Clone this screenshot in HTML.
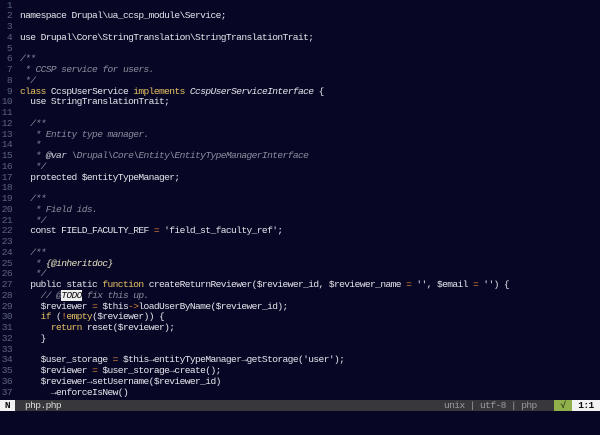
<!DOCTYPE html>
<html><head><meta charset="utf-8"><style>
body{margin:0;width:600px;height:435px;background:#070725;overflow:hidden;font-family:"Liberation Mono",monospace;font-size:9.6px;letter-spacing:-0.61px;color:#e2e2ea}
.l{position:absolute;left:0;height:10.75px;line-height:10.75px;white-space:pre}
.n{display:inline-block;width:12px;text-align:right;color:#5c6478;margin-right:8px;letter-spacing:-0.61px}
.c{color:#8a8c9c;font-style:italic}
.k{color:#e6c062}
.o{color:#e0843c}
.i{font-style:italic}
#sb{position:absolute;left:0;top:400px;width:600px;height:11px;background:#38383c;line-height:11px;white-space:pre}
</style></head><body>
<div class="l" style="top:0.6px"><span class="n">1</span></div>
<div class="l" style="top:11.35px"><span class="n">2</span>namespace Drupal\ua_ccsp_module\Service;</div>
<div class="l" style="top:22.1px"><span class="n">3</span></div>
<div class="l" style="top:32.85px"><span class="n">4</span>use Drupal\Core\StringTranslation\StringTranslationTrait;</div>
<div class="l" style="top:43.6px"><span class="n">5</span></div>
<div class="l" style="top:54.35px"><span class="n">6</span><span class="c">/**</span></div>
<div class="l" style="top:65.1px"><span class="n">7</span><span class="c"> * CCSP service for users.</span></div>
<div class="l" style="top:75.85px"><span class="n">8</span><span class="c"> */</span></div>
<div class="l" style="top:86.6px"><span class="n">9</span><span class="k">class</span> CcspUserService <span class="k">implements</span> <span class="i">CcspUserServiceInterface</span> {</div>
<div class="l" style="top:97.35px"><span class="n">10</span>  use StringTranslationTrait;</div>
<div class="l" style="top:108.1px"><span class="n">11</span></div>
<div class="l" style="top:118.85px"><span class="n">12</span><span class="c">  /**</span></div>
<div class="l" style="top:129.6px"><span class="n">13</span><span class="c">   * Entity type manager.</span></div>
<div class="l" style="top:140.35px"><span class="n">14</span><span class="c">   *</span></div>
<div class="l" style="top:151.1px"><span class="n">15</span><span class="c">   * <span style="color:#cfcfd8">@var</span> \Drupal\Core\Entity\EntityTypeManagerInterface</span></div>
<div class="l" style="top:161.85px"><span class="n">16</span><span class="c">   */</span></div>
<div class="l" style="top:172.6px"><span class="n">17</span>  protected $entityTypeManager;</div>
<div class="l" style="top:183.35px"><span class="n">18</span></div>
<div class="l" style="top:194.1px"><span class="n">19</span><span class="c">  /**</span></div>
<div class="l" style="top:204.85px"><span class="n">20</span><span class="c">   * Field ids.</span></div>
<div class="l" style="top:215.6px"><span class="n">21</span><span class="c">   */</span></div>
<div class="l" style="top:226.35px"><span class="n">22</span>  const FIELD_FACULTY_REF <span class="o">=</span> 'field_st_faculty_ref';</div>
<div class="l" style="top:237.1px"><span class="n">23</span></div>
<div class="l" style="top:247.85px"><span class="n">24</span><span class="c">  /**</span></div>
<div class="l" style="top:258.6px"><span class="n">25</span><span class="c">   * <span style="color:#e6e0c0">{@inheritdoc}</span></span></div>
<div class="l" style="top:269.35px"><span class="n">26</span><span class="c">   */</span></div>
<div class="l" style="top:280.1px"><span class="n">27</span>  public static <span class="k">function</span> createReturnReviewer($reviewer_id, $reviewer_name <span class="o">=</span> '', $email <span class="o">=</span> '') {</div>
<div class="l" style="top:290.85px"><span class="n">28</span><span class="c">    // @<span style="background:#eee;color:#111">TODO</span> fix this up.</span></div>
<div class="l" style="top:301.6px"><span class="n">29</span>    $reviewer <span class="o">=</span> $this<span class="o">-&gt;</span>loadUserByName($reviewer_id);</div>
<div class="l" style="top:312.35px"><span class="n">30</span>    <span class="k">if</span> (<span class="o">!</span><span class="k">empty</span>($reviewer)) {</div>
<div class="l" style="top:323.1px"><span class="n">31</span>      <span class="k">return</span> reset($reviewer);</div>
<div class="l" style="top:333.85px"><span class="n">32</span>    }</div>
<div class="l" style="top:344.6px"><span class="n">33</span></div>
<div class="l" style="top:355.35px"><span class="n">34</span>    $user_storage <span class="o">=</span> $this→entityTypeManager→getStorage('user');</div>
<div class="l" style="top:366.1px"><span class="n">35</span>    $reviewer <span class="o">=</span> $user_storage→create();</div>
<div class="l" style="top:376.85px"><span class="n">36</span>    $reviewer→setUsername($reviewer_id)</div>
<div class="l" style="top:387.6px"><span class="n">37</span>      →enforceIsNew()</div>
<div id="sb"><span style="position:absolute;left:0;width:15px;background:#f2f2f2;color:#111;text-align:center;font-weight:bold">N</span><span style="position:absolute;left:25px;color:#ddd">php.php</span><span style="position:absolute;left:444px;color:#9a9aa0">unix | utf-8 | php</span><span style="position:absolute;left:554px;width:18px;background:#8fb04a;color:#111;text-align:center">√</span><span style="position:absolute;left:572px;width:28px;background:#f2f2f2;color:#111;text-align:center;font-weight:bold">1:1</span></div>
</body></html>
